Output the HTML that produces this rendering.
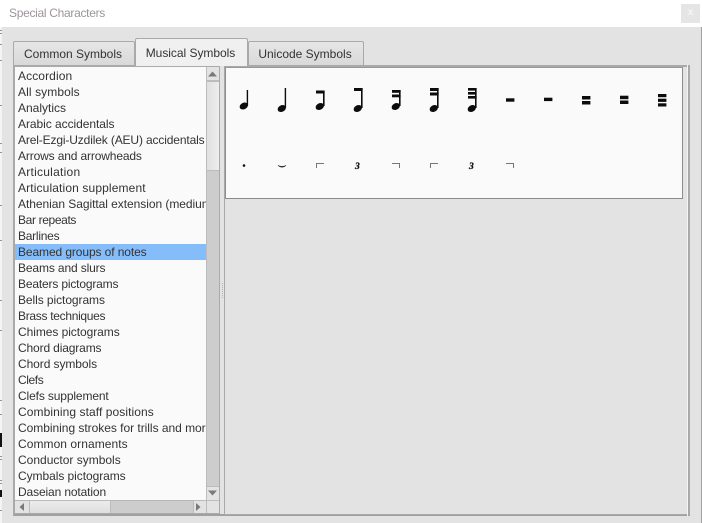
<!DOCTYPE html>
<html><head><meta charset="utf-8"><style>
html,body{margin:0;padding:0;background:#e3e3e3}
#w{position:relative;width:702px;height:523px;overflow:hidden;background:#e3e3e3;font-family:"Liberation Sans",sans-serif;font-size:12px;color:#333}
#w div{position:absolute;box-sizing:border-box}
.tab{border:1px solid #a9a9a9;border-bottom:0;border-radius:2px 2px 0 0;background:linear-gradient(#e6e6e6,#d9d9d9);text-align:center;line-height:24px;white-space:nowrap;padding-right:2px}
.row{left:3px;height:16px;line-height:16px;white-space:nowrap;width:188px;overflow:hidden;color:#333}
.btn{background:#e3e3e3;border:1px solid #bcbcbc}
</style></head><body><div id="w">
<div style="left:0;top:0;width:702px;height:27px;background:#fff"></div>
<div style="left:9px;top:5px;font-size:12px;letter-spacing:-.3px;line-height:16px;color:#9c959c">Special Characters</div>
<div style="left:681px;top:4px;width:19px;height:19px;background:#e5e5e5;color:#f6f6f6;text-align:center;line-height:17px;font-size:10px;font-weight:bold">x</div>
<div style="left:701px;top:27px;width:1px;height:496px;background:#a0a0a0"></div>
<div style="left:0;top:27px;width:2px;height:496px;background:#f4f4f4"></div>

<div style="left:13px;top:65px;width:677px;height:451px;border:1px solid #a9a9a9;border-bottom:2px solid #a0a0a0;background:#e3e3e3"></div>
<div class="tab" style="left:13px;top:41px;width:122px;height:24px">Common Symbols</div>
<div class="tab" style="left:248px;top:41px;width:116px;height:24px">Unicode Symbols</div>
<div class="tab" style="left:135px;top:38px;width:113px;background:#f0f0f0;line-height:29px;z-index:2;height:28px;letter-spacing:-.03px">Musical Symbols</div>

<!-- list -->
<div style="left:14px;top:66px;width:206px;height:448px;border:1px solid #aaa;background:#fafafa;overflow:hidden">
<div class="row" style="top:1px;letter-spacing:.1px">Accordion</div>
<div class="row" style="top:17px;letter-spacing:.1px">All symbols</div>
<div class="row" style="top:33px">Analytics</div>
<div class="row" style="top:49px;letter-spacing:-.05px">Arabic accidentals</div>
<div class="row" style="top:65px;letter-spacing:-.14px">Arel-Ezgi-Uzdilek (AEU) accidentals</div>
<div class="row" style="top:81px;letter-spacing:-.14px">Arrows and arrowheads</div>
<div class="row" style="top:97px;letter-spacing:.25px">Articulation</div>
<div class="row" style="top:113px;letter-spacing:.13px">Articulation supplement</div>
<div class="row" style="top:129px;letter-spacing:-.05px">Athenian Sagittal extension (medium</div>
<div class="row" style="top:145px;letter-spacing:-.36px">Bar repeats</div>
<div class="row" style="top:161px;letter-spacing:-.25px">Barlines</div>
<div style="left:0;top:177px;width:191px;height:16px;background:#85bdfb"></div>
<div class="row" style="top:177px;letter-spacing:-.1px">Beamed groups of notes</div>
<div class="row" style="top:193px;letter-spacing:-.13px">Beams and slurs</div>
<div class="row" style="top:209px;letter-spacing:-.17px">Beaters pictograms</div>
<div class="row" style="top:225px;letter-spacing:-.07px">Bells pictograms</div>
<div class="row" style="top:241px;letter-spacing:-.3px">Brass techniques</div>
<div class="row" style="top:257px;letter-spacing:-.06px">Chimes pictograms</div>
<div class="row" style="top:273px;letter-spacing:-.14px">Chord diagrams</div>
<div class="row" style="top:289px;letter-spacing:-.08px">Chord symbols</div>
<div class="row" style="top:305px;letter-spacing:-.4px">Clefs</div>
<div class="row" style="top:321px;letter-spacing:-.13px">Clefs supplement</div>
<div class="row" style="top:337px;letter-spacing:.08px">Combining staff positions</div>
<div class="row" style="top:353px;letter-spacing:-.03px">Combining strokes for trills and mor</div>
<div class="row" style="top:369px;letter-spacing:.06px">Common ornaments</div>
<div class="row" style="top:385px">Conductor symbols</div>
<div class="row" style="top:401px;letter-spacing:-.06px">Cymbals pictograms</div>
<div class="row" style="top:417px;letter-spacing:-.13px">Daseian notation</div>
<!-- v scrollbar -->
<div style="left:191px;top:0;width:13px;height:433px;background:#cdcdcd;border-left:1px solid #bcbcbc"></div>
<div style="left:191px;top:14px;width:13px;height:90px;background:linear-gradient(90deg,#e0e0e0,#ededed);border:1px solid #bcbcbc;border-right:0"></div>
<div class="btn" style="left:191px;top:0;width:13px;height:14px;border-top:0;border-right:0"></div>
<div class="btn" style="left:191px;top:419px;width:13px;height:14px;border-bottom:0;border-right:0"></div>
<!-- h scrollbar -->
<div style="left:0;top:433px;width:204px;height:13px;background:#e3e3e3;border-top:1px solid #b5b5b5"></div>
<div style="left:14px;top:433px;width:82px;height:13px;background:linear-gradient(#ececec,#dedede);border:1px solid #bcbcbc;border-bottom:0"></div>
<div style="left:96px;top:434px;width:82px;height:12px;background:#cdcdcd"></div>
<div style="left:178px;top:433px;width:13px;height:13px;background:#e3e3e3;border:1px solid #bcbcbc;border-bottom:0;border-right:0"></div>
<div style="left:191px;top:433px;width:13px;height:13px;background:#e3e3e3;border-left:1px solid #bcbcbc;border-top:1px solid #bcbcbc"></div>
</div>

<!-- splitter + right -->
<div style="left:224px;top:66px;width:465px;height:449px;border:1px solid #a9a9a9;background:#e3e3e3"></div>
<div style="left:225px;top:67px;width:458px;height:132px;background:#fafafa;border:1px solid #8e8e8e;border-bottom-color:#8a8a8a;border-top-color:#999"></div>
<div style="left:687px;top:65px;width:1px;height:451px;background:#f4f4f4"></div>

<svg style="position:absolute;left:0;top:0" width="702" height="523" viewBox="0 0 702 523" fill="#0c0c0c">
<defs>
<ellipse id="h" cx="0" cy="0" rx="4.400" ry="3.200" transform="rotate(-27)"/>
</defs>
<!-- scroll arrows -->
<path d="M208 76.500l4.500-5 4.500 5z" fill="#7a7a7a"/>
<path d="M208 490.500l4.500 5 4.500-5z" fill="#7a7a7a"/>
<path d="M24 503l-4.500 4 4.500 4z" fill="#7a7a7a"/>
<path d="M196 503l4.500 4-4.500 4z" fill="#7a7a7a"/>
<!-- splitter dots -->
<path d="M222.500 283v16" stroke="#b5b5b5" stroke-dasharray="1 1" fill="none"/>
<!-- left debris -->
<path d="M1 30v6M1 44v2M1 60v2M1 105v2M1 143v3M1 152v2M1 205v3M1 240v2M1 300v3M1 330v3M1 400v2M1 414v2M1 456v4M1 480v4M1 510v2" stroke="#333" stroke-dasharray="1 2" fill="none"/>
<path d="M0 433h2v14h-2zM0 490h2v7h-2z" fill="#111"/>
<!-- notes row 1 -->
<use href="#h" x="243.800" y="106"/><rect x="246.700" y="90" width="1.400" height="16"/>
<use href="#h" x="281.800" y="108.500"/><rect x="284.700" y="88" width="1.400" height="20"/>
<use href="#h" x="319.800" y="106.500"/><rect x="323" y="91" width="1.600" height="15"/><rect x="316" y="90.500" width="8.600" height="3"/>
<use href="#h" x="357.800" y="108.500"/><rect x="361" y="88" width="1.600" height="20"/><rect x="354" y="88" width="8.600" height="3"/>
<use href="#h" x="395.800" y="106.500"/><rect x="399" y="90" width="1.600" height="16"/><rect x="392" y="90" width="8.600" height="2.800"/><rect x="392" y="94.500" width="8.600" height="2.800"/>
<use href="#h" x="433.800" y="108.500"/><rect x="437" y="88" width="1.600" height="20"/><rect x="430" y="88" width="8.600" height="3"/><rect x="430" y="92.500" width="8.600" height="3"/>
<use href="#h" x="471.800" y="108.500"/><rect x="475" y="88" width="1.600" height="20"/><rect x="468" y="88" width="8.600" height="2.600"/><rect x="468" y="92" width="8.600" height="2.600"/><rect x="468" y="96" width="8.600" height="2.600"/>
<rect x="506" y="98.300" width="8.400" height="3.400"/><rect x="544" y="97.700" width="8.400" height="3.400"/>
<rect x="582" y="96" width="8.400" height="3.500"/><rect x="582" y="101" width="8.400" height="3.500"/>
<rect x="620" y="95.700" width="8.400" height="3.500"/><rect x="620" y="100.500" width="8.400" height="3.500"/>
<rect x="658" y="94" width="8.400" height="3.200"/><rect x="658" y="98.700" width="8.400" height="3.200"/><rect x="658" y="103.300" width="8.400" height="3.200"/>
<!-- row 2 -->
<circle cx="244" cy="165.500" r="1.300"/>
<path d="M278 165.500q4 3.500 8 0q-4 1.800-8 0z" stroke="#333" stroke-width=".6"/>
<g fill="none" stroke="#777" stroke-width="1">
<path d="M316.500 168v-4.500h7.500M392 163.500h7.500v4.500M430.500 168v-4.500h7.500M506 163.500h7.500v4.500"/>
</g>
<text x="355" y="169" font-family="Liberation Serif,serif" font-size="9.500" font-weight="bold" font-style="italic" fill="#111" stroke="#111" stroke-width=".3">3</text>
<text x="469" y="169" font-family="Liberation Serif,serif" font-size="9.500" font-weight="bold" font-style="italic" fill="#111" stroke="#111" stroke-width=".3">3</text>
</svg>
</div></body></html>
